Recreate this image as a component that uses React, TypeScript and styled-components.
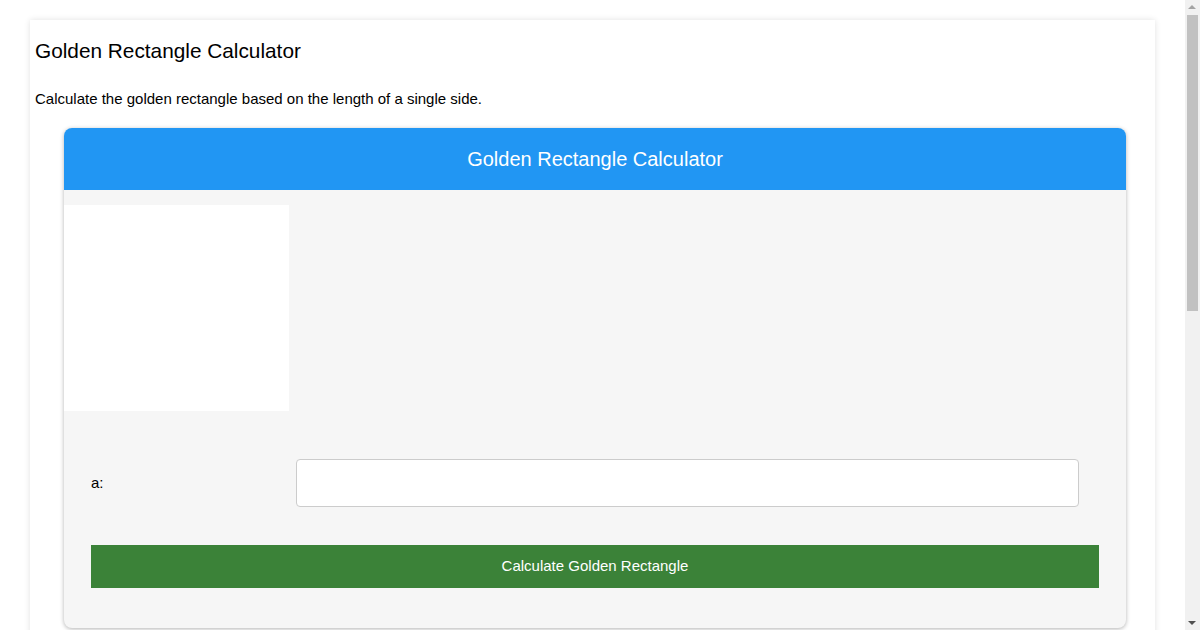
import React, { useState } from "react";
import styled, { createGlobalStyle } from "styled-components";

const GlobalStyle = createGlobalStyle`
  html, body {
    margin: 0;
    padding: 0;
    background: #ffffff;
    font-family: "Liberation Sans", Arial, sans-serif;
    color: #000000;
  }
`;

const Page = styled.div`
  padding: 20px 45px 40px 30px;
  min-height: 1300px;
  box-sizing: border-box;
`;

/* the window's scrollbar, as it shows in the screenshot */
const ScrollTrack = styled.div`
  position: fixed;
  top: 0;
  right: 0;
  width: 15px;
  height: 100vh;
  background: #f1f1f1;
`;

const ScrollThumb = styled.div`
  position: absolute;
  top: 15px;
  left: 2px;
  width: 11px;
  height: 296px;
  background: #c1c1c1;
`;

const Arrow = styled.div<{ $down?: boolean }>`
  position: absolute;
  left: 3px;
  width: 0;
  height: 0;
  border-left: 4.5px solid transparent;
  border-right: 4.5px solid transparent;
  ${({ $down }) =>
    $down
      ? "bottom: 5px; border-top: 4.5px solid #505050;"
      : "top: 5px; border-bottom: 4.5px solid #a3a3a3;"}
`;

const Article = styled.div`
  background: #ffffff;
  padding: 5px 5px 60px;
  box-shadow: 0 0 6px rgba(0, 0, 0, 0.12);
`;

const Title = styled.h1`
  font-size: 20.8px;
  font-weight: normal;
  margin: 14px 0 0;
  line-height: 24px;
`;

const Intro = styled.p`
  font-size: 15px;
  margin: 26px 0 19px;
  line-height: 20px;
`;

const Calculator = styled.div`
  width: 1062px;
  margin-left: 29px;
  background: #f6f6f6;
  border-radius: 8px;
  box-shadow: 0 1px 4px rgba(0, 0, 0, 0.3);
  padding-bottom: 40px;
  overflow: hidden;
`;

const Header = styled.div`
  background: #2196f3;
  color: #ffffff;
  height: 62px;
  display: flex;
  align-items: center;
  justify-content: center;
  font-size: 20px;
`;

const Preview = styled.canvas`
  display: block;
  width: 225px;
  height: 206px;
  margin-top: 15px;
  background: #ffffff;
`;

const Form = styled.div`
  padding: 48px 27px 0;
`;

const Row = styled.div`
  display: grid;
  grid-template-columns: 205px 783px;
  align-items: center;
`;

const Label = styled.label`
  font-size: 15px;
  padding-bottom: 2px;
`;

const Input = styled.input`
  box-sizing: border-box;
  height: 48px;
  width: 100%;
  border: 1px solid #cccccc;
  border-radius: 4px;
  background: #ffffff;
  padding: 0 10px;
  font-size: 15px;
  font-family: inherit;
`;

const Button = styled.button`
  display: block;
  width: 100%;
  height: 43px;
  margin-top: 38px;
  padding: 0 0 2px;
  border: none;
  background: #3b8238;
  color: #ffffff;
  font-size: 15px;
  font-family: inherit;
  cursor: pointer;
`;

export default function App() {
  const [a, setA] = useState("");

  return (
    <>
      <GlobalStyle />
      <Page>
        <Article>
          <Title>Golden Rectangle Calculator</Title>
          <Intro>Calculate the golden rectangle based on the length of a single side.</Intro>
          <Calculator>
            <Header>Golden Rectangle Calculator</Header>
            <Preview width={225} height={206} />
            <Form>
              <Row>
                <Label htmlFor="side-a">a:</Label>
                <Input id="side-a" value={a} onChange={(e) => setA(e.target.value)} />
              </Row>
              <Button type="button">Calculate Golden Rectangle</Button>
            </Form>
          </Calculator>
        </Article>
      </Page>
      <ScrollTrack>
        <Arrow />
        <ScrollThumb />
        <Arrow $down />
      </ScrollTrack>
    </>
  );
}
